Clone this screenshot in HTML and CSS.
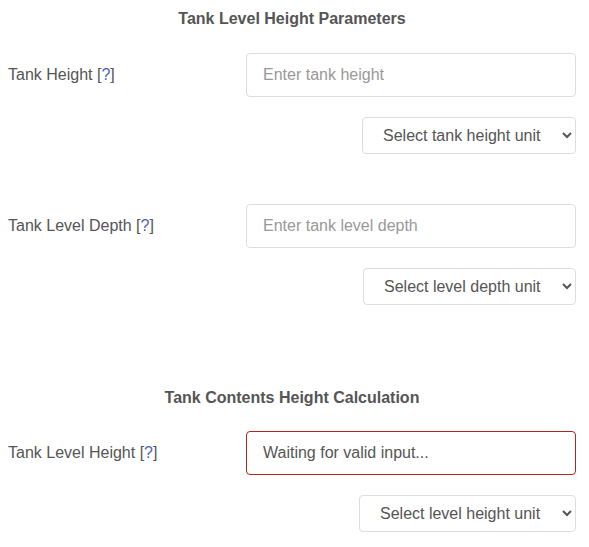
FILE: index.html
```html
<!DOCTYPE html>
<html lang="en">
  <head>
    <meta charset="UTF-8" />
    <meta name="viewport" content="width=device-width, initial-scale=1.0" />
    <title>Tank Level Height</title>
    <link rel="stylesheet" href="styles.css">
  </head>
  <body>
    <div class="calc">
      <div class="section">
        <h3 class="section-title">Tank Level Height Parameters</h3>

        <div class="field-row">
          <label class="field-label" for="tank-height">Tank Height [<a href="#" class="help">?</a>]</label>
          <input id="tank-height" class="field-input" type="text" placeholder="Enter tank height" />
        </div>
        <div class="unit-row">
          <select class="unit-select">
            <option>Select tank height unit</option>
          </select>
        </div>

        <div class="field-row">
          <label class="field-label" for="level-depth">Tank Level Depth [<a href="#" class="help">?</a>]</label>
          <input id="level-depth" class="field-input" type="text" placeholder="Enter tank level depth" />
        </div>
        <div class="unit-row">
          <select class="unit-select">
            <option>Select level depth unit</option>
          </select>
        </div>
      </div>

      <div class="section result">
        <h3 class="section-title">Tank Contents Height Calculation</h3>

        <div class="field-row">
          <label class="field-label" for="level-height">Tank Level Height [<a href="#" class="help">?</a>]</label>
          <input id="level-height" class="field-input invalid" type="text" value="Waiting for valid input..." readonly />
        </div>
        <div class="unit-row">
          <select class="unit-select">
            <option>Select level height unit</option>
          </select>
        </div>
      </div>
    </div>
  </body>
</html>
```

FILE: styles.css
```css
body {
  font-family: "Liberation Sans", Arial, sans-serif;
  margin: 0;
  background: #fff;
  color: #555;
}

.calc {
  padding: 9px 13px 0 8px;
}

.section-title {
  margin: 0 0 24px;
  font-size: 16px;
  line-height: 20px;
  font-weight: 700;
  text-align: center;
  color: #555;
}

.result {
  margin-top: 83px;
}

.result .section-title {
  margin-bottom: 23px;
}

.field-row {
  display: grid;
  grid-template-columns: 238px 1fr;
  align-items: center;
}

.field-label {
  font-size: 16px;
  color: #555;
}

.help {
  color: #4a5fc8;
  text-decoration: none;
}

.field-input {
  box-sizing: border-box;
  width: 100%;
  height: 44px;
  padding: 12px 16px;
  font-family: inherit;
  font-size: 16px;
  color: #555;
  border: 1px solid #ddd;
  border-radius: 4px;
  outline: none;
}

.field-input::placeholder {
  color: #999;
}

.field-input.invalid {
  border-color: #b22222;
}

.unit-row {
  display: flex;
  justify-content: flex-end;
  margin: 20px 0 50px;
}

.section:last-child .unit-row {
  margin-bottom: 0;
}

.unit-select {
  height: 37px;
  padding: 0 18px 0 16px;
  font-family: inherit;
  font-size: 16px;
  color: #555;
  background: #fff;
  border: 1px solid #ddd;
  border-radius: 4px;
}
```
